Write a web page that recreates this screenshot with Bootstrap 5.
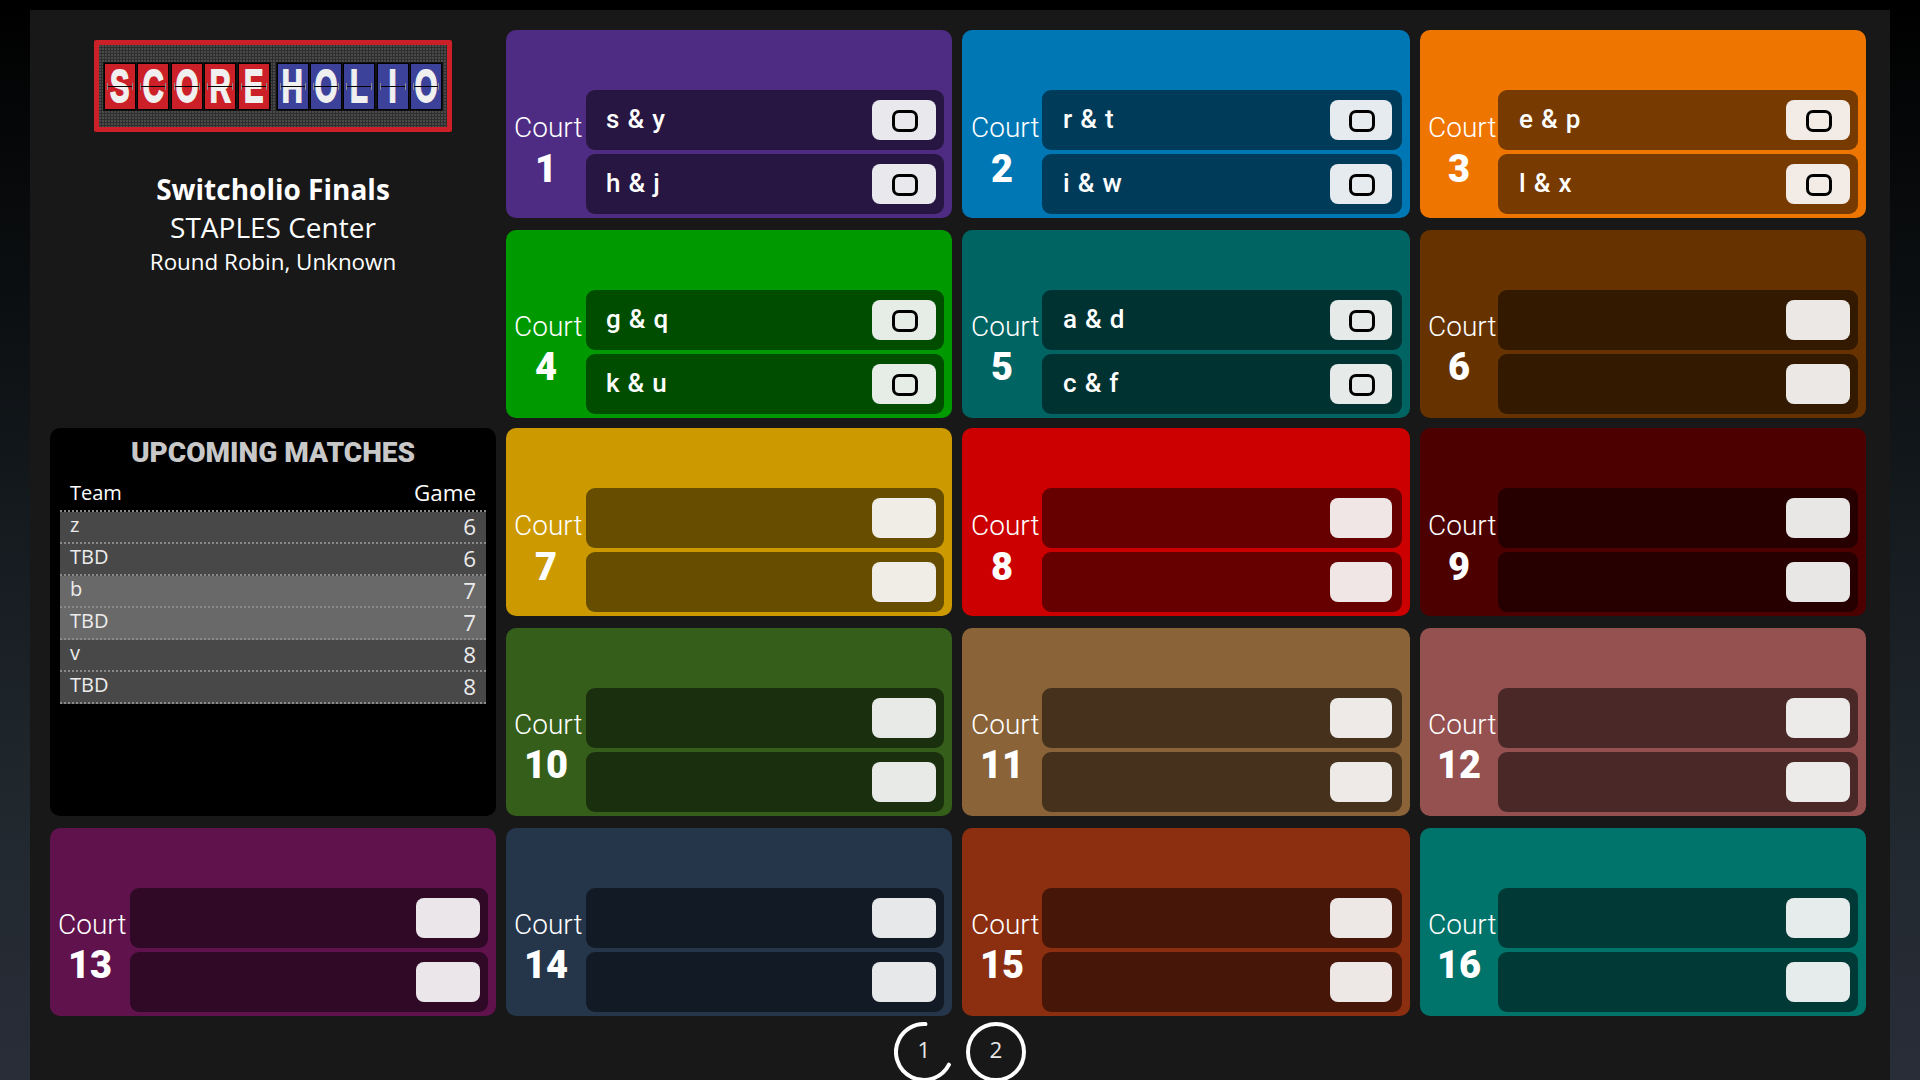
<!DOCTYPE html>
<html lang="en">
<head>
<meta charset="utf-8">
<title>Scoreholio</title>
<link href="https://cdn.jsdelivr.net/npm/bootstrap@5.3.0/dist/css/bootstrap.min.css" rel="stylesheet">
<style>
html,body{height:1080px;overflow:hidden}
body{background:linear-gradient(180deg,#000 0%,#1f272d 72%,#292d38 100%);font-family:"Open Sans",sans-serif;color:#fff}
.stage{margin:10px 30px 0;width:1860px;height:1070px;background:#181818;padding:20px 24px 0 20px}
.board{display:grid;grid-template-columns:446px 446px 448px 446px;grid-template-rows:200px 198px 200px 200px 188px;column-gap:10px;align-items:start}
.brand{grid-row:1/3}
.sh-logo{width:358px;height:92px;margin:10px auto 0;border:5px solid #cc2029;background-color:#2e2e2e;background-image:radial-gradient(circle at 1px 1px,#4a4a4a 0 .8px,transparent 1px);background-size:3px 3px;gap:7px;border-radius:2px}
.flap-set{gap:1.4px}
.flap{width:32px;height:47px;border:1px solid #000;outline:1px solid #111;position:relative;font:700 26px/1 "Liberation Sans",sans-serif;color:#f0f0f0;-webkit-text-stroke:1px #f0f0f0}
.flap b{display:block;transform:scale(1.12,1.8);font-weight:700}
.flap-red{background:#cc2029}
.flap-blue{background:#3c429a}
.flap::after{content:"";position:absolute;left:2px;right:2px;top:19px;height:7px;background:linear-gradient(#000,#000) center/100% 1px no-repeat;border-left:1px solid #8a8a8a;border-right:1px solid #8a8a8a}
.ev-name{font-weight:700;font-size:28px;line-height:38px;margin-top:38px}
.ev-place{font-size:28px;line-height:38px}
.ev-round{font-size:22.4px;line-height:31px}
.upnext{grid-row:3/5;height:388px;background:#000;border-radius:10px;padding:6px 10px}
.up-title{font:900 28px/38px Roboto,sans-serif;color:#c8c8c8;text-align:center;margin:0 0 6px}
.up-head,.up-row{padding:0 10px;font-size:20px;height:32px;border-bottom:2px dotted #8a8a8a;color:#ececec}
.up-head{height:34px;padding-bottom:3px;color:#fff}
.up-row span:first-child{margin-top:-4px}
.up-num{font-size:22.4px}
.up-row .up-num{margin-top:-1px}
.shade-a{background:#484848}
.shade-b{background:#696969}
.tile{height:188px;border-radius:10px;padding:60px 8px 4px 8px;gap:4px}
.tag{width:68px;flex:none;margin-top:20px;white-space:nowrap;font-family:Roboto,sans-serif}
.tile-up .tag{margin-top:21px}
.tile-up .tag-num{margin-top:1px}
.tag-word{font-weight:300;font-size:28px;line-height:34px}
.tag-num{font-weight:900;font-size:38px;line-height:46px;margin-right:4px}
.lines{flex:1;gap:4px;min-width:0}
.line{height:60px;background:rgba(0,0,0,.5);border-radius:9px;padding:0 8px 0 20px}
.line-name{font:500 26px/1 Roboto,sans-serif;letter-spacing:.8px;margin-top:-3px}
.btn.pick{width:64px;height:40px;background:rgba(255,255,255,.9);border-radius:8px;border:0;padding:0}
.pick svg{width:26px;height:22px;margin:2px 0 0 2px}
.tile-c .line{padding:0 10px 0 21px}
.tile-c .btn.pick{width:62px}
.tile-c .tag-word{margin:0 -1px 0 1px}
.tile-d .tag{width:66px}
.tile-d .tag-word{text-align:left}
.tile-d .line{padding-left:21px}
.pager{gap:12px;margin:6px 0 0 4px}
.dial{position:relative;width:60px;height:60px;font-size:22.4px;color:#e8e8e8}
.dial svg{position:absolute;inset:0}
.dial span{margin-top:-4px}
.court-1{background:#4f2c83}.court-2{background:#0077b5}.court-3{background:#ee7500}.court-4{background:#009a00}
.court-5{background:#006462}.court-6{background:#663300}.court-7{background:#cc9a00}.court-8{background:#cc0000}
.court-9{background:#4d0000}.court-10{background:#355e1b}.court-11{background:#8a6338}.court-12{background:#955050}
.court-13{background:#5f124b}.court-14{background:#25354a}.court-15{background:#8c2e10}.court-16{background:#00736b}
</style>
</head>
<body>
<svg width="0" height="0" class="position-absolute"><defs><symbol id="serve" viewBox="0 0 26 22"><rect x="1.5" y="1.5" width="23" height="19" rx="5.5" fill="none" stroke="#000" stroke-width="3"/></symbol></defs></svg>
<div class="stage">
<div class="board">
<div class="brand text-center">
<div class="sh-logo d-flex align-items-center justify-content-center">
<div class="flap-set d-flex"><div class="flap flap-red d-flex justify-content-center align-items-center"><b>S</b></div><div class="flap flap-red d-flex justify-content-center align-items-center"><b>C</b></div><div class="flap flap-red d-flex justify-content-center align-items-center"><b>O</b></div><div class="flap flap-red d-flex justify-content-center align-items-center"><b>R</b></div><div class="flap flap-red d-flex justify-content-center align-items-center"><b>E</b></div></div>
<div class="flap-set d-flex"><div class="flap flap-blue d-flex justify-content-center align-items-center"><b>H</b></div><div class="flap flap-blue d-flex justify-content-center align-items-center"><b>O</b></div><div class="flap flap-blue d-flex justify-content-center align-items-center"><b>L</b></div><div class="flap flap-blue d-flex justify-content-center align-items-center"><b>I</b></div><div class="flap flap-blue d-flex justify-content-center align-items-center"><b>O</b></div></div>
</div>
<div class="ev-name">Switcholio Finals</div>
<div class="ev-place">STAPLES Center</div>
<div class="ev-round">Round Robin, Unknown</div>
</div>

<div class="tile tile-up d-flex court-1"><div class="tag text-center"><div class="tag-word">Court</div><div class="tag-num">1</div></div><div class="lines d-flex flex-column"><div class="line d-flex align-items-center justify-content-between"><span class="line-name">s &amp; y</span><button class="btn pick d-flex align-items-center justify-content-center"><svg><use href="#serve"/></svg></button></div><div class="line d-flex align-items-center justify-content-between"><span class="line-name">h &amp; j</span><button class="btn pick d-flex align-items-center justify-content-center"><svg><use href="#serve"/></svg></button></div></div></div>
<div class="tile tile-c tile-up d-flex court-2"><div class="tag text-center"><div class="tag-word">Court</div><div class="tag-num">2</div></div><div class="lines d-flex flex-column"><div class="line d-flex align-items-center justify-content-between"><span class="line-name">r &amp; t</span><button class="btn pick d-flex align-items-center justify-content-center"><svg><use href="#serve"/></svg></button></div><div class="line d-flex align-items-center justify-content-between"><span class="line-name">i &amp; w</span><button class="btn pick d-flex align-items-center justify-content-center"><svg><use href="#serve"/></svg></button></div></div></div>
<div class="tile tile-d tile-up d-flex court-3"><div class="tag text-center"><div class="tag-word">Court</div><div class="tag-num">3</div></div><div class="lines d-flex flex-column"><div class="line d-flex align-items-center justify-content-between"><span class="line-name">e &amp; p</span><button class="btn pick d-flex align-items-center justify-content-center"><svg><use href="#serve"/></svg></button></div><div class="line d-flex align-items-center justify-content-between"><span class="line-name">l &amp; x</span><button class="btn pick d-flex align-items-center justify-content-center"><svg><use href="#serve"/></svg></button></div></div></div>
<div class="tile d-flex court-4"><div class="tag text-center"><div class="tag-word">Court</div><div class="tag-num">4</div></div><div class="lines d-flex flex-column"><div class="line d-flex align-items-center justify-content-between"><span class="line-name">g &amp; q</span><button class="btn pick d-flex align-items-center justify-content-center"><svg><use href="#serve"/></svg></button></div><div class="line d-flex align-items-center justify-content-between"><span class="line-name">k &amp; u</span><button class="btn pick d-flex align-items-center justify-content-center"><svg><use href="#serve"/></svg></button></div></div></div>
<div class="tile tile-c d-flex court-5"><div class="tag text-center"><div class="tag-word">Court</div><div class="tag-num">5</div></div><div class="lines d-flex flex-column"><div class="line d-flex align-items-center justify-content-between"><span class="line-name">a &amp; d</span><button class="btn pick d-flex align-items-center justify-content-center"><svg><use href="#serve"/></svg></button></div><div class="line d-flex align-items-center justify-content-between"><span class="line-name">c &amp; f</span><button class="btn pick d-flex align-items-center justify-content-center"><svg><use href="#serve"/></svg></button></div></div></div>
<div class="tile tile-d d-flex court-6"><div class="tag text-center"><div class="tag-word">Court</div><div class="tag-num">6</div></div><div class="lines d-flex flex-column"><div class="line d-flex align-items-center justify-content-end"><button class="btn pick"></button></div><div class="line d-flex align-items-center justify-content-end"><button class="btn pick"></button></div></div></div>

<div class="upnext">
<h2 class="up-title">UPCOMING MATCHES</h2>
<div class="up-head d-flex justify-content-between align-items-center"><span>Team</span><span class="up-num">Game</span></div>
<div class="up-row shade-a d-flex justify-content-between align-items-center"><span>z</span><span class="up-num">6</span></div>
<div class="up-row shade-a d-flex justify-content-between align-items-center"><span>TBD</span><span class="up-num">6</span></div>
<div class="up-row shade-b d-flex justify-content-between align-items-center"><span>b</span><span class="up-num">7</span></div>
<div class="up-row shade-b d-flex justify-content-between align-items-center"><span>TBD</span><span class="up-num">7</span></div>
<div class="up-row shade-a d-flex justify-content-between align-items-center"><span>v</span><span class="up-num">8</span></div>
<div class="up-row shade-a d-flex justify-content-between align-items-center"><span>TBD</span><span class="up-num">8</span></div>
</div>

<div class="tile tile-up d-flex court-7"><div class="tag text-center"><div class="tag-word">Court</div><div class="tag-num">7</div></div><div class="lines d-flex flex-column"><div class="line d-flex align-items-center justify-content-end"><button class="btn pick"></button></div><div class="line d-flex align-items-center justify-content-end"><button class="btn pick"></button></div></div></div>
<div class="tile tile-c tile-up d-flex court-8"><div class="tag text-center"><div class="tag-word">Court</div><div class="tag-num">8</div></div><div class="lines d-flex flex-column"><div class="line d-flex align-items-center justify-content-end"><button class="btn pick"></button></div><div class="line d-flex align-items-center justify-content-end"><button class="btn pick"></button></div></div></div>
<div class="tile tile-d tile-up d-flex court-9"><div class="tag text-center"><div class="tag-word">Court</div><div class="tag-num">9</div></div><div class="lines d-flex flex-column"><div class="line d-flex align-items-center justify-content-end"><button class="btn pick"></button></div><div class="line d-flex align-items-center justify-content-end"><button class="btn pick"></button></div></div></div>
<div class="tile d-flex court-10"><div class="tag text-center"><div class="tag-word">Court</div><div class="tag-num">10</div></div><div class="lines d-flex flex-column"><div class="line d-flex align-items-center justify-content-end"><button class="btn pick"></button></div><div class="line d-flex align-items-center justify-content-end"><button class="btn pick"></button></div></div></div>
<div class="tile tile-c d-flex court-11"><div class="tag text-center"><div class="tag-word">Court</div><div class="tag-num">11</div></div><div class="lines d-flex flex-column"><div class="line d-flex align-items-center justify-content-end"><button class="btn pick"></button></div><div class="line d-flex align-items-center justify-content-end"><button class="btn pick"></button></div></div></div>
<div class="tile tile-d d-flex court-12"><div class="tag text-center"><div class="tag-word">Court</div><div class="tag-num">12</div></div><div class="lines d-flex flex-column"><div class="line d-flex align-items-center justify-content-end"><button class="btn pick"></button></div><div class="line d-flex align-items-center justify-content-end"><button class="btn pick"></button></div></div></div>
<div class="tile d-flex court-13"><div class="tag text-center"><div class="tag-word">Court</div><div class="tag-num">13</div></div><div class="lines d-flex flex-column"><div class="line d-flex align-items-center justify-content-end"><button class="btn pick"></button></div><div class="line d-flex align-items-center justify-content-end"><button class="btn pick"></button></div></div></div>
<div class="tile d-flex court-14"><div class="tag text-center"><div class="tag-word">Court</div><div class="tag-num">14</div></div><div class="lines d-flex flex-column"><div class="line d-flex align-items-center justify-content-end"><button class="btn pick"></button></div><div class="line d-flex align-items-center justify-content-end"><button class="btn pick"></button></div></div></div>
<div class="tile tile-c d-flex court-15"><div class="tag text-center"><div class="tag-word">Court</div><div class="tag-num">15</div></div><div class="lines d-flex flex-column"><div class="line d-flex align-items-center justify-content-end"><button class="btn pick"></button></div><div class="line d-flex align-items-center justify-content-end"><button class="btn pick"></button></div></div></div>
<div class="tile tile-d d-flex court-16"><div class="tag text-center"><div class="tag-word">Court</div><div class="tag-num">16</div></div><div class="lines d-flex flex-column"><div class="line d-flex align-items-center justify-content-end"><button class="btn pick"></button></div><div class="line d-flex align-items-center justify-content-end"><button class="btn pick"></button></div></div></div>
</div>
<div class="pager d-flex justify-content-center">
<div class="dial d-flex align-items-center justify-content-center"><svg viewBox="0 0 60 60"><circle cx="30" cy="30" r="28" fill="none" stroke="#fff" stroke-width="4" stroke-linecap="round" stroke-dasharray="120 56" transform="rotate(27 30 30)"/></svg><span>1</span></div>
<div class="dial d-flex align-items-center justify-content-center"><svg viewBox="0 0 60 60"><circle cx="30" cy="30" r="28" fill="none" stroke="#fff" stroke-width="4"/></svg><span>2</span></div>
</div>
</div>
<script src="https://cdn.jsdelivr.net/npm/bootstrap@5.3.0/dist/js/bootstrap.bundle.min.js"></script>
</body>
</html>
